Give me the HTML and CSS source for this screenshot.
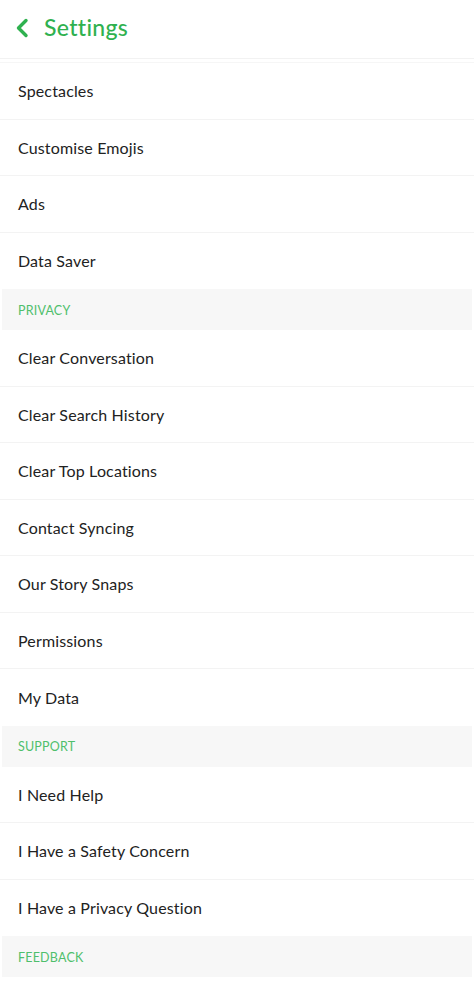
FILE: index.html
```html
<!DOCTYPE html>
<html>
<head>
<meta charset="utf-8">
<link rel="stylesheet" href="styles.css">
</head>
<body>
<header class="topbar">
  <svg class="back" width="14" height="20" viewBox="0 0 14 20"><path d="M11 2.5 L3.5 10 L11 17.5" fill="none" stroke="#2fb14f" stroke-width="3.4" stroke-linecap="round" stroke-linejoin="round"/></svg>
  <h1 class="title">Settings</h1>
</header>
<div class="divider"></div>
<ul class="list">
  <li class="row">Spectacles</li>
  <li class="row">Customise Emojis</li>
  <li class="row">Ads</li>
  <li class="row last">Data Saver</li>
  <li class="section">PRIVACY</li>
  <li class="row">Clear Conversation</li>
  <li class="row">Clear Search History</li>
  <li class="row">Clear Top Locations</li>
  <li class="row">Contact Syncing</li>
  <li class="row">Our Story Snaps</li>
  <li class="row">Permissions</li>
  <li class="row last">My Data</li>
  <li class="section">SUPPORT</li>
  <li class="row">I Need Help</li>
  <li class="row">I Have a Safety Concern</li>
  <li class="row last">I Have a Privacy Question</li>
  <li class="section">FEEDBACK</li>
</ul>
</body>
</html>
```
FILE: styles.css
```css
html, body {
  margin: 0;
  padding: 0;
  background: #ffffff;
  font-family: "Lato", "Noto Sans", sans-serif;
}
.topbar {
  height: 58px;
  display: flex;
  align-items: center;
  padding-left: 15px;
  box-sizing: border-box;
}
.back {
  display: block;
  margin-top: -2px;
}
.title {
  margin: 0 0 0 15px;
  font-size: 23px;
  font-weight: 500;
  color: #2fb14f;
  letter-spacing: 0.3px;
  line-height: 1;
  margin-top: -4px;
}
.divider {
  height: 5px;
  border-top: 1px solid #f2f2f2;
  border-bottom: 1px solid #f6f6f6;
  box-sizing: border-box;
}
.list {
  list-style: none;
  margin: 0;
  padding: 0;
}
.row {
  height: 56.5px;
  box-sizing: border-box;
  display: flex;
  align-items: center;
  padding-left: 18px;
  font-size: 16px;
  color: #222222;
  letter-spacing: 0.15px;
  border-bottom: 1px solid #f3f3f3;
}
.row.last {
  border-bottom: none;
}
.section {
  height: 41px;
  margin: 0 2px;
  box-sizing: border-box;
  display: flex;
  align-items: center;
  padding-left: 16px;
  padding-top: 1px;
  background: #f7f7f7;
  color: #4fbf6c;
  font-size: 12.5px;
  letter-spacing: 0.2px;
}
```
